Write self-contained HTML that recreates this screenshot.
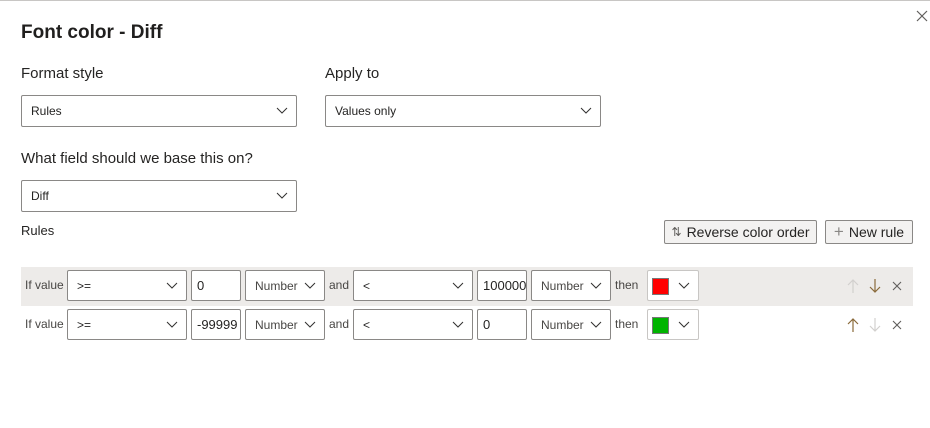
<!DOCTYPE html>
<html><head><meta charset="utf-8"><style>
*{box-sizing:border-box;margin:0;padding:0}
body{width:930px;height:428px;background:#fff;font-family:"Segoe UI","Liberation Sans",sans-serif;color:#252423;position:relative;overflow:hidden;border-top:1px solid #c8c6c4}
.a{position:absolute;white-space:nowrap}
.dd{position:absolute;border:1px solid #8a8886;border-radius:2px;background:#fff;font-size:12px;color:#252423;padding-left:9px;display:flex;align-items:center}
.dd svg{position:absolute;right:8px;top:50%;margin-top:-4px}
.row{position:absolute;left:21px;width:892px;height:39px}
.lbl{font-size:12px;color:#484644}
.btn{position:absolute;border:1px solid #8a8886;border-radius:2px;background:#f3f2f1;font-size:14px;display:flex;align-items:center;justify-content:center;color:#252423}
</style></head><body>
<div class="a" style="left:21px;top:21px;font-size:19px;font-weight:600;color:#201f1e">Font color - Diff</div>
<svg class="a" style="left:916px;top:9px" width="12" height="12" viewBox="0 0 12 12"><path d="M1 1L11 11M11 1L1 11" stroke="#605e5c" stroke-width="1.2"/></svg>
<div class="a" style="left:21px;top:64px;font-size:15px">Format style</div>
<div class="a" style="left:325px;top:64px;font-size:15px">Apply to</div>
<div class="dd" style="left:21px;top:94px;width:276px;height:32px">Rules<svg width="12" height="7"><path d="M1 1L6 6L11 1" fill="none" stroke="#323130"/></svg></div>
<div class="dd" style="left:325px;top:94px;width:276px;height:32px">Values only<svg width="12" height="7"><path d="M1 1L6 6L11 1" fill="none" stroke="#323130"/></svg></div>
<div class="a" style="left:21px;top:149px;font-size:15px">What field should we base this on?</div>
<div class="dd" style="left:21px;top:179px;width:276px;height:32px">Diff<svg width="12" height="7"><path d="M1 1L6 6L11 1" fill="none" stroke="#323130"/></svg></div>
<div class="a" style="left:21px;top:222px;font-size:13px">Rules</div>
<div class="btn" style="left:664px;top:219px;width:153px;height:24px"><span style="color:#605e5c;font-size:12px;margin-right:5px">⇅</span>Reverse color order</div>
<div class="btn" style="left:825px;top:219px;width:88px;height:24px"><span style="color:#8a8886;font-size:17px;margin-right:5px;font-weight:300">+</span>New rule</div>

<div class="row" style="top:266px;background:#edebe9"></div>

<!-- row 1 -->
<div class="a lbl" style="left:25px;top:277px">If value</div>
<div class="dd" style="left:67px;top:269px;width:120px;height:31px">&gt;=<svg width="12" height="7"><path d="M1 1L6 6L11 1" fill="none" stroke="#323130"/></svg></div>
<div class="dd" style="left:191px;top:269px;width:50px;height:31px;padding-left:5px;font-size:13px">0</div>
<div class="dd" style="left:245px;top:269px;width:80px;height:31px;color:#484644">Number<svg width="12" height="7"><path d="M1 1L6 6L11 1" fill="none" stroke="#323130"/></svg></div>
<div class="a lbl" style="left:329px;top:277px">and</div>
<div class="dd" style="left:353px;top:269px;width:120px;height:31px">&lt;<svg width="12" height="7"><path d="M1 1L6 6L11 1" fill="none" stroke="#323130"/></svg></div>
<div class="dd" style="left:477px;top:269px;width:50px;height:31px;padding-left:5px;font-size:13px;overflow:hidden">100000</div>
<div class="dd" style="left:531px;top:269px;width:80px;height:31px;color:#484644">Number<svg width="12" height="7"><path d="M1 1L6 6L11 1" fill="none" stroke="#323130"/></svg></div>
<div class="a lbl" style="left:615px;top:277px">then</div>
<div class="dd" style="left:647px;top:269px;width:52px;height:31px;border-color:#c8c6c4"><div style="position:absolute;left:4px;top:7px;width:17px;height:17px;background:#f00;border:1px solid #777"></div><svg width="12" height="7"><path d="M1 1L6 6L11 1" fill="none" stroke="#323130"/></svg></div>
<svg class="a" style="left:847px;top:278px" width="12" height="14"><path d="M6 14V1M1 6L6 1L11 6" fill="none" stroke="#d2d0ce" stroke-width="1.2"/></svg>
<svg class="a" style="left:869px;top:278px" width="12" height="14"><path d="M6 0V13M1 8L6 13L11 8" fill="none" stroke="#8a6a3a" stroke-width="1.2"/></svg>
<svg class="a" style="left:892px;top:280px" width="10" height="10"><path d="M1 1L9 9M9 1L1 9" stroke="#605e5c" stroke-width="1.1"/></svg>

<!-- row 2 -->
<div class="a lbl" style="left:25px;top:316px">If value</div>
<div class="dd" style="left:67px;top:308px;width:120px;height:31px">&gt;=<svg width="12" height="7"><path d="M1 1L6 6L11 1" fill="none" stroke="#323130"/></svg></div>
<div class="dd" style="left:191px;top:308px;width:50px;height:31px;padding-left:5px;font-size:13px;overflow:hidden">-99999</div>
<div class="dd" style="left:245px;top:308px;width:80px;height:31px;color:#484644">Number<svg width="12" height="7"><path d="M1 1L6 6L11 1" fill="none" stroke="#323130"/></svg></div>
<div class="a lbl" style="left:329px;top:316px">and</div>
<div class="dd" style="left:353px;top:308px;width:120px;height:31px">&lt;<svg width="12" height="7"><path d="M1 1L6 6L11 1" fill="none" stroke="#323130"/></svg></div>
<div class="dd" style="left:477px;top:308px;width:50px;height:31px;padding-left:5px;font-size:13px">0</div>
<div class="dd" style="left:531px;top:308px;width:80px;height:31px;color:#484644">Number<svg width="12" height="7"><path d="M1 1L6 6L11 1" fill="none" stroke="#323130"/></svg></div>
<div class="a lbl" style="left:615px;top:316px">then</div>
<div class="dd" style="left:647px;top:308px;width:52px;height:31px;border-color:#c8c6c4"><div style="position:absolute;left:4px;top:7px;width:17px;height:17px;background:#00b400;border:1px solid #777"></div><svg width="12" height="7"><path d="M1 1L6 6L11 1" fill="none" stroke="#323130"/></svg></div>
<svg class="a" style="left:847px;top:317px" width="12" height="14"><path d="M6 14V1M1 6L6 1L11 6" fill="none" stroke="#8a6a3a" stroke-width="1.2"/></svg>
<svg class="a" style="left:869px;top:317px" width="12" height="14"><path d="M6 0V13M1 8L6 13L11 8" fill="none" stroke="#d2d0ce" stroke-width="1.2"/></svg>
<svg class="a" style="left:892px;top:319px" width="10" height="10"><path d="M1 1L9 9M9 1L1 9" stroke="#605e5c" stroke-width="1.1"/></svg>
</body></html>
